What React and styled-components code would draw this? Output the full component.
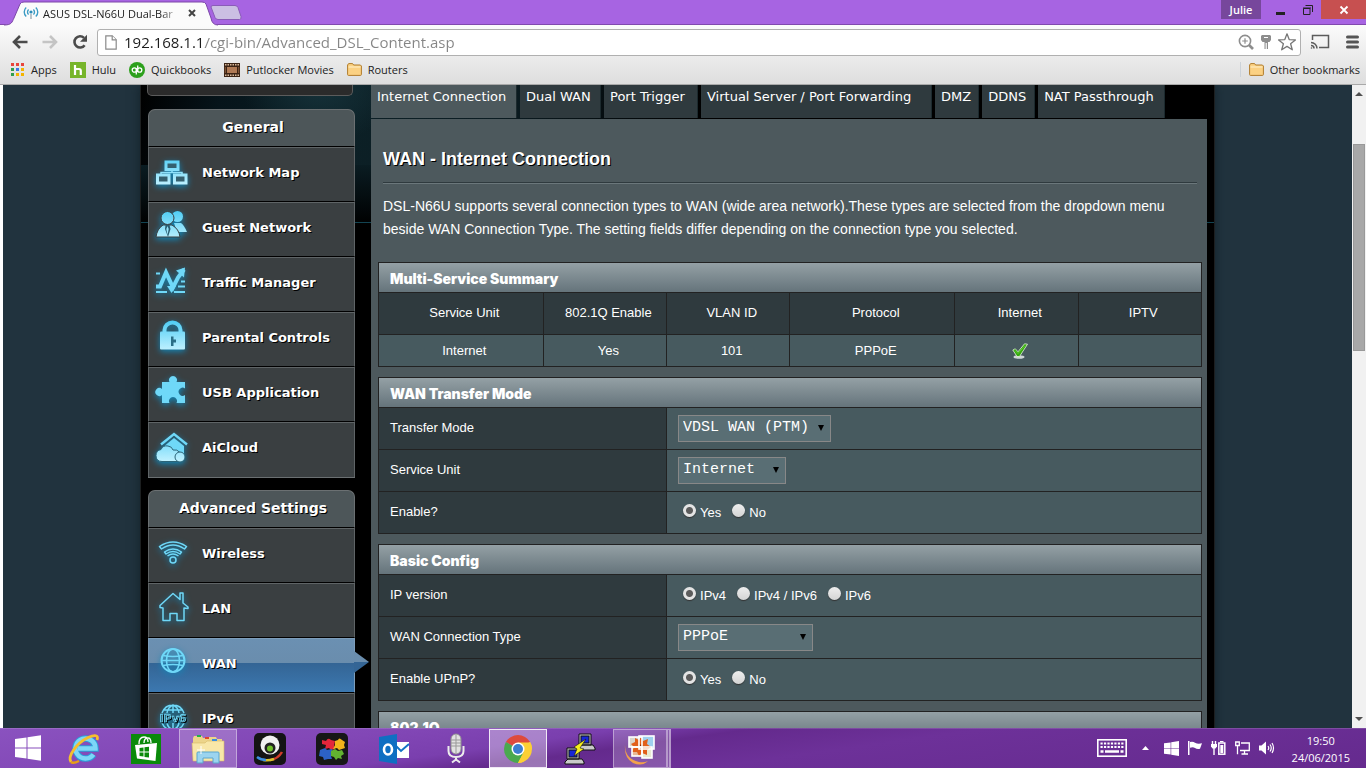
import React, { useState } from 'react';
import styled, { createGlobalStyle, css } from 'styled-components';

const uiFont = '"Open Sans", "Noto Sans", sans-serif';
const menuFont = '"DejaVu Sans", sans-serif';
const bodyFont = '"Liberation Sans", Arial, sans-serif';
const monoFont = '"Liberation Mono", monospace';

const GlobalStyle = createGlobalStyle`
  * {
    box-sizing: border-box;
  }
  body {
    margin: 0;
    overflow: hidden;
    font-family: ${bodyFont};
  }
  button, input, select {
    font: inherit;
    margin: 0;
  }
  button {
    background: none;
    border: 0;
    padding: 0;
    color: inherit;
  }
  a {
    color: inherit;
    text-decoration: none;
  }
  svg {
    display: block;
    flex: none;
    overflow: visible;
  }
`;

/* ---------- browser icons ---------- */

const AntennaIcon = () => (
  <svg width="14" height="14" viewBox="0 0 14 14" fill="none" stroke="#3d9cc4" strokeWidth="1.4">
    <circle cx="7" cy="6" r="1.6" fill="#2d8cb8" stroke="none" />
    <path d="M4.6 3.4a3.6 3.6 0 0 0 0 5.2M9.4 3.4a3.6 3.6 0 0 1 0 5.2M2.2 1.4a6.4 6.4 0 0 0 0 9.2M11.8 1.4a6.4 6.4 0 0 1 0 9.2" />
    <path d="M7 8v5" stroke="#b9c4c9" strokeWidth="2" />
  </svg>
);

const BackIcon = ({ color, flip }) => (
  <svg width="16" height="14" viewBox="0 0 16 14" fill="none" stroke={color} strokeWidth="2.6">
    <g transform={flip ? 'translate(16 0) scale(-1 1)' : undefined}>
      <path d="M15.5 7H2.5M8 1L2 7l6 6" />
    </g>
  </svg>
);

const ReloadIcon = () => (
  <svg width="16" height="16" viewBox="0 0 16 16">
    <path d="M12.6 11.2A5.6 5.6 0 1 1 12 3.9" fill="none" stroke="#4b4b4b" strokeWidth="2.6" />
    <path d="M15 .8v7H8z" fill="#4b4b4b" />
  </svg>
);

const PageIcon = () => (
  <svg width="12" height="15" viewBox="0 0 12 15" fill="#fff" stroke="#8a8a8a" strokeWidth="1.2">
    <path d="M.8.8h6.4l4 4v9.4H.8z" />
    <path d="M7.2.8v4h4" />
  </svg>
);

const ZoomIcon = () => (
  <svg width="16" height="16" viewBox="0 0 16 16" fill="none" stroke="#8d8d8d">
    <circle cx="7" cy="7" r="5.6" strokeWidth="1.6" />
    <path d="M4.2 7h5.6M7 4.2v5.6" strokeWidth="1.2" />
    <path d="M11 11l4 4" strokeWidth="2.6" />
  </svg>
);

const KeyIcon = () => (
  <svg width="10" height="16" viewBox="0 0 10 16">
    <path d="M1 1h8l1 1v4L8.500 8H7v7H3.500V8H1.500L0 6V2z" fill="#8d8d8d" />
    <path d="M3 3.500h4M5.200 9v6" stroke="#fff" strokeWidth="1.200" />
  </svg>
);

const StarIcon = () => (
  <svg width="18" height="18" viewBox="0 0 18 18">
    <path d="M9 .8l2.200 5.800 6.200.3-4.800 3.900 1.700 6L9 13.400l-5.300 3.400 1.700-6L.6 6.900l6.200-.3z" fill="#fff" stroke="#777" strokeWidth="1.300" strokeLinejoin="round" />
  </svg>
);

const CastIcon = () => (
  <svg width="20" height="16" viewBox="0 0 20 16" fill="none" stroke="#5c5c5c" strokeWidth="1.500">
    <path d="M2.500 6V1.500h16v12H9" />
    <path d="M1 8.500a6 6 0 0 1 6 6M1 11.500a3 3 0 0 1 3 3" />
    <circle cx="1.500" cy="14" r=".8" fill="#5c5c5c" stroke="none" />
  </svg>
);

const MenuIcon = () => (
  <svg width="13" height="14" viewBox="0 0 13 14">
    <path d="M1.500 2h10M1.500 7h10M1.500 12h10" stroke="#555" strokeWidth="3" strokeLinecap="round" />
  </svg>
);

const appColors = ['#e8453c', '#e8453c', '#e8453c', '#2f9e4f', '#3b78e7', '#f4b400', '#2f9e4f', '#f4b400', '#f4b400'];

const AppsIcon = () => (
  <svg width="14" height="14" viewBox="0 0 14 14">
    {appColors.map((fill, i) => (
      <rect key={i} x={(i % 3) * 5} y={Math.floor(i / 3) * 5} width="3" height="3" fill={fill} />
    ))}
  </svg>
);

const HuluIcon = () => (
  <svg width="16" height="16" viewBox="0 0 16 16">
    <rect width="16" height="16" fill="#77b52b" />
    <path d="M5 3v10M5 8.500q0-1.500 1.500-1.500H9q1.800 0 1.800 1.800V13" fill="none" stroke="#fff" strokeWidth="2.200" />
  </svg>
);

const QuickbooksIcon = () => (
  <svg width="16" height="16" viewBox="0 0 16 16" fill="none" stroke="#fff" strokeWidth="1.300">
    <circle cx="8" cy="8" r="8" fill="#2ca01c" stroke="none" />
    <circle cx="5.400" cy="8" r="2.200" />
    <circle cx="10.600" cy="8" r="2.200" />
    <path d="M7.300 6v6.500M8.700 3.500V10" />
  </svg>
);

const FilmIcon = () => (
  <svg width="16" height="14" viewBox="0 0 16 14">
    <rect width="16" height="14" fill="#3b2314" />
    <rect x="3" y="4" width="10" height="6" fill="#b07a55" />
    <path d="M1 1.800h14M1 12.200h14" stroke="#d9b99a" strokeWidth="1.600" strokeDasharray="1.500 1" />
    <path d="M1.300 4v6M14.700 4v6" stroke="#8a5a3a" />
  </svg>
);

const FolderIcon = () => (
  <svg width="15" height="13" viewBox="0 0 15 13">
    <path d="M.6 11.500V2L1.600.600h4l1 1.400h6.800l1 1v8.500q0 .9-1 .9H1.500q-.9 0-.9-.9z" fill="#fbd183" stroke="#b07c2c" />
    <path d="M1.500 4h12" stroke="#fff0c8" />
  </svg>
);

/* ---------- router menu icons ---------- */

const cyan = '#6fd8f8';
const glow = 'url(#glow)';

const IconDefs = () => (
  <svg width="0" height="0" aria-hidden="true">
    <linearGradient id="glow" gradientUnits="userSpaceOnUse" x1="0" y1="0" x2="0" y2="30">
      <stop offset="0" stopColor="#4fcdf5" />
      <stop offset="1" stopColor="#c3f2ff" />
    </linearGradient>
  </svg>
);

const menuIcons = {
  network: (
    <g fill="#35606f" stroke={glow} strokeWidth="3">
      <rect x="11" y="6" width="12" height="7.500" />
      <rect x="2.500" y="19" width="11.500" height="8" />
      <rect x="19.500" y="19" width="11.500" height="8" />
      <path d="M17 14v3M6 18v-1.500h21V18" strokeWidth="1.500" fill="none" />
    </g>
  ),
  guests: (
    <g fill={glow}>
      <circle cx="22.500" cy="5.500" r="5.500" />
      <path d="M19 12h7q3 2 6 9H22z" />
      <path d="M1 26q1-8 7-12h9q7 4 8 12z" stroke="#3a3f41" strokeWidth="1" />
      <circle cx="12.500" cy="7" r="6.500" stroke="#3a3f41" strokeWidth="1" />
      <path d="M10.500 14h4l1 4-2.500 8-3-8z" fill="#285c70" />
      <path d="M12.500 15l1.200 3-1.200 6-1.200-6z" />
    </g>
  ),
  traffic: (
    <g fill="none" stroke={cyan}>
      <path d="M1 20.500h4l6-14 7 15 5-10 6-8" strokeWidth="4" />
      <path d="M21 4.500l9-3-1 10z" fill={cyan} stroke="none" />
      <path d="M1 7.500h4M26 15.500h4M23 20.500h7M1 26h11M19 26h11" strokeWidth="2.200" />
      <path d="M12 20l4.500 7L21 20" fill={cyan} stroke="none" />
    </g>
  ),
  lock: (
    <g>
      <path d="M9.500 11V9a8 7.500 0 0 1 16 0v2" fill="none" stroke={glow} strokeWidth="4" />
      <rect x="5" y="10.500" width="25" height="18" rx="1" fill={glow} />
      <path d="M16 15.500h2.500v3h2.500v3h-2.500v3.500H16z" fill="#2a6e86" />
    </g>
  ),
  puzzle: (
    <path
      d="M7 6h7.500a4 4 0 1 1 7 0H30v6.500a4 4 0 1 0 0 6.500v8h-8.500a4 4 0 1 0-7 0H7v-8a4 4 0 1 1 0-6z"
      fill={cyan}
    />
  ),
  cloud: (
    <g>
      <path d="M6 12.500L19 2l13 10.500" fill="none" stroke={cyan} strokeWidth="2.400" />
      <path d="M10 13.500L19 6l10 8v11H10z" fill={cyan} />
      <path d="M7 29.500q-6 0-6-6 0-5 5-6 2-4.500 7-3.500 4 .5 5 4 4-1 7 2.500l-2 9z" fill={glow} stroke="#2a6478" strokeWidth="1" />
      <circle cx="25" cy="25" r="5" fill={glow} stroke="#2a6478" strokeWidth="1" />
    </g>
  ),
  wifi: (
    <g fill="none" stroke={cyan} strokeWidth="1.500" strokeLinejoin="round">
      <path d="M4.500 9.500q13.500-9 27 0l-2 2.500q-11.500-8-23 0z" />
      <path d="M9.500 15q8.500-6 17 0l-1.500 2q-7-5-14 0z" />
      <path d="M12.500 19q5.500-4 11 0" />
      <circle cx="18" cy="23" r="3" />
    </g>
  ),
  home: (
    <path
      d="M5 15.500v-2L18 1.500l7 6V1h3v10l5 4v1.500l-4-.500v12.500h-7v-7h-7v7H8V16z"
      fill="none" stroke={cyan} strokeWidth="1.500" strokeLinejoin="round"
    />
  ),
  globe: (
    <g fill="none" stroke={cyan} strokeWidth="1.600">
      <circle cx="18" cy="13.500" r="11.500" strokeWidth="2" />
      <ellipse cx="18" cy="13.500" rx="6.500" ry="11.500" />
      <path d="M6 13.500h24M8 8.500q10 2 20 0M8 18.500q10-2 20 0" />
    </g>
  ),
  ipv6: (
    <g fill="none" stroke={cyan} strokeWidth="1.500">
      <path d="M7 10q3-8 11-8t11 8M7 20q3 7 11 7t11-7M12 10q1-6 6-8 5 2 6 8M12 20q1 5 6 7 5-2 6-7M18 2v8M18 20v7M9 7h18" />
      <text x="18" y="19" textAnchor="middle" fontFamily={menuFont} fontSize="11" fill={cyan} stroke={cyan} strokeWidth=".5">IPv6</text>
    </g>
  ),
};

const TickIcon = () => (
  <svg width="16" height="16" viewBox="0 0 16 16">
    <ellipse cx="7" cy="14" rx="5.500" ry="1.800" fill="#cfd6d6" />
    <path d="M.8 7l2.500-1.200 2.700 3L12.500.8l3 .4L7.500 13.500H5z" fill="#37a80f" stroke="#e6f3df" strokeWidth=".8" />
    <path d="M1.800 7l1.400-.5 2.800 3.500L13 1.800l1.200.2L7 12H5.500z" fill="#37a80f" />
    <path d="M3 7.500l3 3L13 2.500" fill="none" stroke="#5fce35" />
  </svg>
);

/* ---------- taskbar icons ---------- */

const WindowsIcon = ({ size }) => (
  <svg width={size} height={size} viewBox="0 0 26 26" fill="#fff">
    <path d="M0 4l11.500-1.600V12.500H0zM12.500 2.200L26 .2v12.300H12.500zM0 13.500h11.500v10L0 22zM12.500 13.500H26v12.300l-13.500-2z" />
  </svg>
);

const ExplorerIcon = () => (
  <svg width="32" height="30" viewBox="0 0 32 30" fill="none">
    <path d="M25.500 20.500a10 10 0 1 1 2-6H10" stroke="#2b9fd8" strokeWidth="6.500" />
    <path d="M25.500 20.500a10 10 0 1 1 2-6H10" stroke="#7dd6f7" strokeWidth="4.500" />
    <path d="M3 28C-1 22 9 9 20 3.500 27 .5 31 1 29 6" stroke="#f5bf2d" strokeWidth="2.800" />
    <path d="M3 28q2 2 8-1" stroke="#e79f17" strokeWidth="2.500" />
  </svg>
);

const StoreIcon = () => (
  <svg width="30" height="30" viewBox="0 0 30 30">
    <rect width="30" height="30" fill="#0a8a0a" />
    <path d="M8 10q0-7 5-7 4 0 4 5M13 9q0-5 4-5 3 0 3 5" fill="none" stroke="#fff" strokeWidth="1.300" />
    <path d="M4 11l22-2-1.500 18L6 24.500z" fill="#fff" />
    <path d="M8.500 14l4-.5v4h-4zM13.500 13.300l4.500-.5v4.700h-4.500zM8.500 18.500h4v4l-4-.5zM13.500 18.500H18v5l-4.500-.6z" fill="#0a8a0a" />
  </svg>
);

const FilesIcon = () => (
  <svg width="32" height="30" viewBox="0 0 32 30">
    <path d="M1 4l1-2h8l1 2h5l1-1h7l1 2h5v22H1z" fill="#ecd48a" />
    <path d="M0 9h13l2-2h17v20H1z" fill="#f8e7a8" stroke="#d6b966" strokeWidth=".6" />
    <path d="M5 1h4v2H5z" fill="#20b04b" />
    <path d="M13 3h4v2h-4z" fill="#e0482e" />
    <path d="M20 5h5v2h-5z" fill="#3a8ee0" />
    <path d="M5 29V19q0-1 1-1h20q1 0 1 1v10h-6v-5H11v5z" fill="#9bd4ef" stroke="#5aa6ce" />
    <path d="M9 12v8M5 16h8" stroke="#fff" />
  </svg>
);

const WebcamIcon = () => (
  <svg width="32" height="32" viewBox="0 0 32 32">
    <rect width="32" height="32" rx="5" fill="#141414" />
    <path d="M16 27q8-1 12-8" fill="none" stroke="#d13b2a" strokeWidth="2.500" />
    <path d="M9 27q6 1 11-1" fill="none" stroke="#d9c22e" strokeWidth="2.500" />
    <path d="M3 24q4 3 9 3" fill="none" stroke="#3c8fe0" strokeWidth="2.500" />
    <circle cx="16" cy="12" r="9.500" fill="#f1f1f1" />
    <circle cx="16" cy="15" r="5.500" fill="#222" />
    <circle cx="16" cy="15.500" r="3" fill="#6ec028" />
  </svg>
);

const JigsawIcon = () => (
  <svg width="32" height="32" viewBox="0 0 32 32">
    <rect width="32" height="32" rx="5" fill="#171717" />
    <path d="M6 7l4 1q2-4 5-1l4 1-1 5 1 3-4 1-2-2-4 1 1-4-4-1z" fill="#e3263b" />
    <path d="M19 8l3-1q1-3 4 0l3 2-1 3 1 3-6 2-2-2-4 1 2-4z" fill="#f2b31b" />
    <path d="M4 17l5-2 2 2 5-1 1 5-2 2 1 3-4 0-4 1-1-3-4-1z" fill="#2c62c6" />
    <path d="M15 18l4-2 3 2 4-1 2 4-3 2 1 3-4-1-2 2-2-3-3-1z" fill="#62b331" />
  </svg>
);

const OutlookIcon = () => (
  <svg width="30" height="30" viewBox="0 0 30 30">
    <rect x="16" y="8" width="14" height="16" fill="#fff" />
    <path d="M17 12l5 5 8-7" fill="none" stroke="#1272c4" strokeWidth="2" />
    <path d="M0 3l18-3v30L0 27z" fill="#0f6fc2" />
    <ellipse cx="9" cy="15.500" rx="4" ry="5" fill="none" stroke="#fff" strokeWidth="2.600" />
  </svg>
);

const MicIcon = () => (
  <svg width="18" height="30" viewBox="0 0 18 30">
    <rect x="4" y="0" width="10" height="20" rx="5" fill="#e2e2e2" stroke="#8f8f8f" />
    <path d="M4 6h10M4 9h10M4 12h10M9 1v18" stroke="#999" />
    <path d="M1.500 12v5q0 6 7.500 6t7.500-6v-5M9 23v4M5 28.500l4-3 4 3" fill="none" stroke="#ececec" strokeWidth="2" />
  </svg>
);

const ChromeIcon = () => (
  <svg width="28" height="28" viewBox="0 0 28 28">
    <path d="M14 14L1.900 7a14 14 0 0 1 24.200 0z" fill="#de4a3c" />
    <path d="M14 14l12.100-7A14 14 0 0 1 14 28z" fill="#fcd035" />
    <path d="M14 14v14A14 14 0 0 1 1.900 7z" fill="#4aa94e" />
    <path d="M14 7.500h12.400q1.600 3 1.600 6.500L19.500 17z" fill="#fcd035" />
    <path d="M8.300 17.200L14 28l5.600-10.800z" fill="#4aa94e" />
    <path d="M20 17l-6 11q3 0 6-1.500z" fill="#fcd035" />
    <circle cx="14" cy="14" r="6.500" fill="#fff" />
    <circle cx="14" cy="14" r="5" fill="#3c7fd0" />
  </svg>
);

const PuttyIcon = () => (
  <svg width="32" height="32" viewBox="0 0 32 32" stroke="#111" strokeWidth="1">
    <path d="M15 1h12v11H15zM13 15l3-3h13l2 3v2H15z" fill="#c9c9c9" />
    <rect x="17" y="3" width="8" height="7" fill="#1726d6" />
    <path d="M3 15h12v11H3zM1 29l3-3h14l2 3v2H1z" fill="#c9c9c9" />
    <rect x="5" y="17" width="8" height="7" fill="#1726d6" />
    <path d="M22 6l-6 9 4 1-10 7 3-7-3-2z" fill="#f7f01c" strokeWidth=".6" />
  </svg>
);

const PhotosIcon = () => (
  <svg width="32" height="32" viewBox="0 0 32 32">
    <path d="M1 12q0 14 14 17 5 1 9-1-6 6-15 2Q0 25 1 12z" fill="#f2a24a" />
    <rect x="5" y="4" width="13" height="10" fill="#d9d6cc" />
    <rect x="15" y="3" width="15" height="13" fill="#9fd1ee" />
    <rect x="8" y="14" width="10" height="9" fill="#e7b894" />
    <rect x="18" y="14" width="10" height="11" fill="#e8ead0" />
    <path d="M17 4l2 4 5-2-1 5 4 3-4 3 0 5-5-2-3 3-2-4-5 0 2-5-3-3 4-2 0-4 4 2z" fill="#e2601b" />
    <circle cx="17" cy="14" r="2.500" fill="#8c2a08" />
    <g fill="none" stroke="#fff" strokeWidth="1.600">
      <rect x="5" y="4" width="13" height="10" />
      <rect x="15" y="3" width="15" height="13" />
      <rect x="8" y="14" width="10" height="9" />
      <rect x="18" y="14" width="10" height="11" />
    </g>
  </svg>
);

const KeyboardIcon = () => (
  <svg width="30" height="18" viewBox="0 0 30 18">
    <rect x=".8" y=".8" width="28.400" height="16.400" fill="none" stroke="#fff" strokeWidth="1.600" />
    <path d="M3.500 4.500h23M3.500 8h23" stroke="#fff" strokeWidth="2.200" strokeDasharray="2.200 1.260" />
    <path d="M3.500 12.500h3M8 12.500h14M23.500 12.500h3" stroke="#fff" strokeWidth="2.500" />
  </svg>
);

const FlagIcon = () => (
  <svg width="14" height="14" viewBox="0 0 14 14" fill="#fff">
    <path d="M0 0h1.500v14H0zM2 1q3-1 5 .8 3 1.500 7 .5l-2 5.500q-3 .8-5-.8-2-1.200-5-.2z" />
  </svg>
);

const BatteryIcon = () => (
  <svg width="15" height="14" viewBox="0 0 15 14" fill="none" stroke="#fff">
    <path d="M1.500 0v3M4.500 0v3M3 7v7" strokeWidth="1.400" />
    <path d="M0 3h6v2.500L4.500 7.500h-3L0 5.500z" fill="#fff" stroke="none" />
    <rect x="7.800" y="2" width="6" height="11.200" strokeWidth="1.500" />
    <path d="M10.800 4v8" strokeWidth="3" />
    <path d="M9 .5h3.500" />
  </svg>
);

const NetworkIcon = () => (
  <svg width="15" height="14" viewBox="0 0 15 14" fill="none" stroke="#fff" strokeWidth="1.300">
    <path d="M6 2h8.300v7.500H5M9.500 9.500v3M6.500 13h6.500" />
    <path d="M.7 1v3.500h3.600V1zM2.500 4.500v8.800" />
  </svg>
);

const SpeakerIcon = () => (
  <svg width="15" height="14" viewBox="0 0 15 14" fill="none" stroke="#fff" strokeWidth="1.200">
    <path d="M0 4.500h2.500L7 .5v13l-4.500-4H0z" fill="#fff" stroke="none" />
    <path d="M9 5q1.500 2 0 4M11 3.500q2.500 3.500 0 7M13 2q3 5 0 10" />
  </svg>
);

/* ---------- data ---------- */

const bookmarks = [
  { label: 'Apps', icon: <AppsIcon /> },
  { label: 'Hulu', icon: <HuluIcon /> },
  { label: 'Quickbooks', icon: <QuickbooksIcon /> },
  { label: 'Putlocker Movies', icon: <FilmIcon /> },
  { label: 'Routers', icon: <FolderIcon /> },
];

const generalMenu = [
  { label: 'Network Map', icon: 'network' },
  { label: 'Guest Network', icon: 'guests' },
  { label: 'Traffic Manager', icon: 'traffic' },
  { label: 'Parental Controls', icon: 'lock' },
  { label: 'USB Application', icon: 'puzzle' },
  { label: 'AiCloud', icon: 'cloud' },
];

const advancedMenu = [
  { label: 'Wireless', icon: 'wifi' },
  { label: 'LAN', icon: 'home' },
  { label: 'WAN', icon: 'globe', active: true },
  { label: 'IPv6', icon: 'ipv6' },
];

const tabs = [
  { label: 'Internet Connection', width: 146, active: true },
  { label: 'Dual WAN', width: 81 },
  { label: 'Port Trigger', width: 94 },
  { label: 'Virtual Server / Port Forwarding', width: 231 },
  { label: 'DMZ', width: 44 },
  { label: 'DDNS', width: 53 },
  { label: 'NAT Passthrough', width: 127 },
];

const summaryColumns = [
  ['Service Unit', '20%'],
  ['802.1Q Enable', '15%'],
  ['VLAN ID', '15%'],
  ['Protocol', '20%'],
  ['Internet', '15%'],
  ['IPTV', '15%'],
];

const taskbarApps = [
  { name: 'Internet Explorer', icon: <ExplorerIcon /> },
  { name: 'Store', icon: <StoreIcon /> },
  { name: 'File Explorer', icon: <FilesIcon />, open: true },
  { name: 'Webcam', icon: <WebcamIcon /> },
  { name: 'Jigsaw', icon: <JigsawIcon /> },
  { name: 'Outlook', icon: <OutlookIcon /> },
  { name: 'Sound Recorder', icon: <MicIcon /> },
  { name: 'Chrome', icon: <ChromeIcon />, open: true, focused: true },
  { name: 'PuTTY', icon: <PuttyIcon /> },
  { name: 'Photo Gallery', icon: <PhotosIcon />, open: true, stacked: true },
];

/* ---------- components ---------- */

function Menu({ title, items }) {
  return (
    <MenuBox>
      <MenuTitle>{title}</MenuTitle>
      {items.map((item) => (
        <MenuItem key={item.label} href="#" $active={item.active}>
          <svg width="33" height="32" viewBox="0 0 33 32">{menuIcons[item.icon]}</svg>
          {item.label}
        </MenuItem>
      ))}
    </MenuBox>
  );
}

function Select({ id, width, options }) {
  return (
    <SelectWrap $width={width}>
      <select id={id}>
        {options.map((option) => <option key={option}>{option}</option>)}
      </select>
    </SelectWrap>
  );
}

function RadioGroup({ name, label, options }) {
  const [value, setValue] = useState(options[0]);

  return (
    <Radios role="radiogroup" aria-label={label}>
      {options.map((option) => (
        <label key={option}>
          <input
            type="radio"
            name={name}
            checked={value === option}
            onChange={() => setValue(option)}
          />
          {option}
        </label>
      ))}
    </Radios>
  );
}

function App() {
  return (
    <>
      <GlobalStyle />
      <Screen>
        <TitleBar>
          <BrowserTab>
            <svg className="shape" width="208" height="24" viewBox="0 0 208 24">
              <path d="M0 24C8 24 8 21 10 17L16 3q1-2 4-2h178q3 0 4 2l5 14q1 7 7 7z" fill="#fbfbfb" />
              <path d="M0 24C8 24 8 21 10 17L16 3q1-2 4-2h178q3 0 4 2l5 14q1 7 7 7" fill="none" stroke="#7c47a8" />
            </svg>
            <AntennaIcon />
            <span className="title">ASUS DSL-N66U Dual-Bar</span>
            <button aria-label="Close tab">
              <svg width="8" height="8" viewBox="0 0 8 8"><path d="M1 1l6 6M7 1L1 7" stroke="#444" strokeWidth="2" /></svg>
            </button>
          </BrowserTab>
          <NewTab aria-label="New tab">
            <svg width="32" height="15" viewBox="0 0 32 15">
              <path d="M1 2q0-1.500 2-1.500h22q2 0 3 2l3 9q.5 3-1.500 3H8q-2 0-3-2z" fill="#cbbfe3" stroke="#8a5bb8" />
            </svg>
          </NewTab>
          <WindowControls>
            <button className="user">Julie</button>
            <button aria-label="Minimize">
              <svg width="9" height="10" viewBox="0 0 9 10"><path d="M0 8.500h9" stroke="#222" strokeWidth="3" /></svg>
            </button>
            <button aria-label="Restore">
              <svg width="10" height="10" viewBox="0 0 10 10" fill="none" stroke="#222">
                <path d="M.5 3.500h6.500v6H.5zM0 3h8M2.500 .5h7v6.500" />
              </svg>
            </button>
            <button className="close" aria-label="Close">
              <svg width="8" height="8" viewBox="0 0 8 8"><path d="M.5.5l7 7M7.500.5l-7 7" stroke="#fff" strokeWidth="1.800" /></svg>
            </button>
          </WindowControls>
        </TitleBar>

        <Toolbar>
          <button aria-label="Back"><BackIcon color="#4b4b4b" /></button>
          <button aria-label="Forward"><BackIcon color="#c4c4c4" flip /></button>
          <button aria-label="Reload"><ReloadIcon /></button>
          <Omnibox>
            <PageIcon />
            <input aria-label="Address" defaultValue="192.168.1.1/cgi-bin/Advanced_DSL_Content.asp" />
            <ZoomIcon />
            <KeyIcon />
            <StarIcon />
          </Omnibox>
          <button aria-label="Cast"><CastIcon /></button>
          <button aria-label="Menu"><MenuIcon /></button>
        </Toolbar>

        <BookmarkBar>
          {bookmarks.map((bookmark) => (
            <a href="#" key={bookmark.label}>{bookmark.icon}{bookmark.label}</a>
          ))}
          <a href="#" className="other"><FolderIcon />Other bookmarks</a>
        </BookmarkBar>

        <Viewport>
          <Page>
            <IconDefs />
            <Site>
              <Sidebar>
                <SetupButton aria-label="Quick Internet Setup" />
                <Menu title="General" items={generalMenu} />
                <Menu title="Advanced Settings" items={advancedMenu} />
              </Sidebar>

              <Main>
                <Tabs>
                  {tabs.map((tab) => (
                    <Tab href="#" key={tab.label} $width={tab.width} $active={tab.active}>{tab.label}</Tab>
                  ))}
                </Tabs>
                <Panel>
                  <h1>WAN - Internet Connection</h1>
                  <p>
                    DSL-N66U supports several connection types to WAN (wide area network).These types are selected from the dropdown menu
                    beside WAN Connection Type. The setting fields differ depending on the connection type you selected.
                  </p>

                  <SummaryTable>
                    <caption>Multi-Service Summary</caption>
                    <thead>
                      <tr>
                        {summaryColumns.map(([label, width]) => <th key={label} width={width}>{label}</th>)}
                      </tr>
                    </thead>
                    <tbody>
                      <tr>
                        <td>Internet</td>
                        <td>Yes</td>
                        <td>101</td>
                        <td>PPPoE</td>
                        <td><TickIcon /></td>
                        <td />
                      </tr>
                    </tbody>
                  </SummaryTable>

                  <FormTable>
                    <caption>WAN Transfer Mode</caption>
                    <tbody>
                      <tr>
                        <th><label htmlFor="mode">Transfer Mode</label></th>
                        <td><Select id="mode" width={153} options={['VDSL WAN (PTM)', 'ADSL WAN (ATM)']} /></td>
                      </tr>
                      <tr>
                        <th><label htmlFor="unit">Service Unit</label></th>
                        <td><Select id="unit" width={108} options={['Internet']} /></td>
                      </tr>
                      <tr>
                        <th>Enable?</th>
                        <td><RadioGroup name="enable" label="Enable?" options={['Yes', 'No']} /></td>
                      </tr>
                    </tbody>
                  </FormTable>

                  <FormTable>
                    <caption>Basic Config</caption>
                    <tbody>
                      <tr>
                        <th>IP version</th>
                        <td><RadioGroup name="ip" label="IP version" options={['IPv4', 'IPv4 / IPv6', 'IPv6']} /></td>
                      </tr>
                      <tr>
                        <th><label htmlFor="type">WAN Connection Type</label></th>
                        <td><Select id="type" width={135} options={['PPPoE', 'PPPoA', 'IPoA']} /></td>
                      </tr>
                      <tr>
                        <th>Enable UPnP?</th>
                        <td><RadioGroup name="upnp" label="Enable UPnP?" options={['Yes', 'No']} /></td>
                      </tr>
                    </tbody>
                  </FormTable>

                  <FormTable>
                    <caption>802.1Q</caption>
                    <tbody />
                  </FormTable>
                </Panel>
              </Main>
            </Site>
          </Page>
          <Scrollbar>
            <i className="up" />
            <i className="thumb" />
            <i className="down" />
          </Scrollbar>
        </Viewport>

        <Taskbar>
          <StartButton aria-label="Start"><WindowsIcon size={26} /></StartButton>
          <Apps>
            {taskbarApps.map((app) => (
              <AppButton key={app.name} aria-label={app.name} $open={app.open} $focused={app.focused} $stacked={app.stacked}>
                {app.icon}
              </AppButton>
            ))}
          </Apps>
          <Tray>
            <KeyboardIcon />
            <svg width="7" height="4" viewBox="0 0 7 4"><path d="M0 4l3.500-4L7 4z" fill="#fff" /></svg>
            <div className="status">
              <WindowsIcon size={15} />
              <FlagIcon />
              <BatteryIcon />
              <NetworkIcon />
              <SpeakerIcon />
            </div>
            <time dateTime="2015-06-24T19:50">
              <span>19:50</span>
              <span>24/06/2015</span>
            </time>
          </Tray>
        </Taskbar>
      </Screen>
    </>
  );
}

/* ---------- styles ---------- */

const Screen = styled.div`
  display: flex;
  flex-direction: column;
  height: 100vh;
  overflow: hidden;
`;

const TitleBar = styled.div`
  display: flex;
  flex: none;
  height: 25px;
  background-color: #a764e2;
  border-bottom: 1px solid #8149ae;
  font-family: ${uiFont};
`;

const BrowserTab = styled.div`
  position: relative;
  display: flex;
  align-items: center;
  width: 204px;
  height: 25px;
  padding: 1px 8px 0 24px;
  gap: 5px;
  font-size: 11px;
  color: #222;
  .shape {
    position: absolute;
    left: 4px;
    top: 1px;
  }
  > svg, .title, button {
    position: relative;
  }
  .title {
    flex: 1;
    overflow: hidden;
    white-space: nowrap;
    mask-image: linear-gradient(to right, #000 85%, transparent);
  }
  button {
    padding: 0 0 0 2px;
  }
`;

const NewTab = styled.button`
  padding: 0 0 0 6px;
  height: 24px;
`;

const WindowControls = styled.div`
  display: flex;
  align-items: flex-start;
  margin-left: auto;
  button {
    display: flex;
    align-items: center;
    justify-content: center;
    width: 27px;
    height: 19px;
  }
  .user {
    width: 40px;
    margin-right: 6px;
    background-color: #77479c;
    color: #fff;
    font-size: 11px;
    font-weight: 600;
  }
  .close {
    width: 45px;
    background-color: #c75050;
  }
`;

const Toolbar = styled.div`
  display: flex;
  flex: none;
  align-items: center;
  height: 34px;
  padding: 0 7px 0 12px;
  gap: 14px;
  background: linear-gradient(#fbfbfb, #eaeaea);
  button:nth-child(3) {
    margin-right: -5px;
  }
  button:last-child {
    margin-left: 2px;
  }
  button:nth-last-child(2) {
    margin-left: -5px;
  }
`;

const Omnibox = styled.div`
  display: flex;
  flex: 1;
  align-items: center;
  gap: 7px;
  height: 27px;
  padding: 0 4px 0 7px;
  background-color: #fff;
  border: 1px solid #b0b0b0;
  border-radius: 3px;
  input {
    flex: 1;
    min-width: 0;
    border: 0;
    padding: 0;
    outline: 0;
    font-family: ${uiFont};
    font-size: 15px;
    color: transparent;
    background: linear-gradient(to right, #1c1c1c 81px, #858585 81px);
    background-clip: text;
  }
`;

const BookmarkBar = styled.nav`
  display: flex;
  flex: none;
  align-items: center;
  height: 26px;
  padding: 0 6px 4px 11px;
  gap: 13px;
  background: linear-gradient(#eaeaea, #dedede);
  border-bottom: 1px solid #a9a9a9;
  font-family: ${uiFont};
  font-size: 11px;
  color: #222;
  a {
    display: flex;
    align-items: center;
    gap: 6px;
  }
  .other {
    margin-left: auto;
    padding-left: 8px;
    border-left: 1px solid #ccd2d8;
  }
`;

const Viewport = styled.div`
  display: flex;
  flex: 1;
  min-height: 0;
`;

const Page = styled.div`
  flex: 1;
  overflow: hidden;
  background-color: #21333e;
  border-left: 3px solid #fff;
`;

const Site = styled.div`
  display: flex;
  gap: 16px;
  max-width: 1075px;
  min-height: 100%;
  margin: 0 auto;
  padding: 0 7px;
  border: solid #1c1f20;
  border-width: 0 1px;
  box-shadow: 0 0 10px #12222a;
  background:
    linear-gradient(#134452, #134452) 0 137px / 100% 1px no-repeat,
    radial-gradient(ellipse at 60% 0, #16323a, transparent 70%) 100px 0 / 130px 60px no-repeat,
    linear-gradient(100deg, #000 0, #06141a 80px, #0c2026 200px, #0b1c22 360px, #000 560px) 0 0 / 600px 80px no-repeat,
    linear-gradient(#0a1c22, #000) 0 80px / 300px 60px no-repeat,
    #000;
`;

const Sidebar = styled.aside`
  display: flex;
  flex: none;
  flex-direction: column;
  width: 207px;
  font-family: ${menuFont};
  font-weight: bold;
  color: #fff;
  text-shadow: 1px 1px 0 #000;
`;

const SetupButton = styled.button`
  height: 11px;
  margin: 0 2px 1px -1px;
  border: 1px solid #5c5c5c;
  border-top: 0;
  border-radius: 0 0 5px 5px;
  background-color: #2b2b2b;
`;

const MenuBox = styled.nav`
  margin-top: 12px;
  border-bottom: 1px solid #6b7072;
`;

const MenuTitle = styled.h2`
  display: flex;
  align-items: center;
  justify-content: center;
  height: 38px;
  margin: 0;
  padding: 0 0 2px 3px;
  border: 1px solid #6b7072;
  border-bottom-color: #000;
  border-radius: 7px 7px 0 0;
  background-color: #4d5659;
  font-size: 14px;
`;

const MenuItem = styled.a`
  position: relative;
  display: flex;
  align-items: center;
  gap: 14px;
  height: 55px;
  padding: 0 0 5px 6px;
  border: 1px solid #5f6466;
  border-bottom-color: #000;
  background-color: #3a3f41;
  font-size: 13px;
  svg {
    filter: drop-shadow(0 2px 3px #1287b8);
  }
  &:last-child {
    border-bottom: 0;
  }
  ${({ $active }) => $active && css`
    border-color: #7d9dba;
    border-bottom-color: #000;
    background: linear-gradient(#6b90b2, #6a8dad 45%, #346595 46%, #3c78b0);
    &::after {
      content: '';
      position: absolute;
      left: 100%;
      top: 12px;
      width: 15px;
      height: 22px;
      background: linear-gradient(#6a8dad 50%, #346595 50%);
      clip-path: polygon(0 0, 100% 50%, 0 100%);
    }
  `}
`;

const Main = styled.main`
  flex: 1;
  min-width: 0;
`;

const Tabs = styled.nav`
  display: flex;
  gap: 3px;
  height: 34px;
  padding-bottom: 1px;
`;

const Tab = styled.a`
  min-width: ${({ $width }) => $width}px;
  padding: 3px 7px 0 6px;
  border-right: 1px solid #1c2a2e;
  background-color: ${({ $active }) => ($active ? '#4d595d' : '#2f3a3e')};
  font-family: ${menuFont};
  font-size: 13px;
  line-height: 18px;
  white-space: nowrap;
  color: #fff;
`;

const Panel = styled.section`
  padding: 0 5px 0 7px;
  background-color: #4d595d;
  color: #fff;
  h1 {
    margin: 0 5px 0 5px;
    padding: 29px 0 12px;
    border-bottom: 1px solid #2f3a3e;
    box-shadow: 0 1px 0 #6b777b;
    font-size: 18px;
    line-height: 22px;
    text-shadow: 1px 1px 0 #000;
  }
  p {
    margin: 12px 5px 21px;
    font-size: 14px;
    line-height: 23px;
  }
`;

const BaseTable = styled.table`
  width: 100%;
  margin-bottom: 10px;
  border-collapse: collapse;
  table-layout: fixed;
  font-size: 13px;
  caption {
    height: 30px;
    padding-left: 11px;
    border: 1px solid #222;
    border-bottom: 0;
    background: linear-gradient(#94a0a5, #65747b);
    font-family: Inter, sans-serif;
    font-size: 14px;
    font-weight: 900;
    line-height: 31px;
    text-align: left;
  }
  th, td {
    border: 1px solid #222;
    font-weight: normal;
  }
  th {
    height: 42px;
    background-color: #2f3a3e;
  }
  td {
    background-color: #475a5f;
  }
`;

const SummaryTable = styled(BaseTable)`
  th {
    padding: 0 2px 2px 9px;
  }
  td {
    height: 32px;
    padding: 0 2px 0 9px;
    text-align: center;
  }
  svg {
    margin: 0 auto;
  }
`;

const FormTable = styled(BaseTable)`
  th {
    width: 35%;
    padding: 0 11px 2px;
    text-align: left;
  }
  td {
    padding: 0 11px;
  }
`;

const SelectWrap = styled.div`
  position: relative;
  width: ${({ $width }) => $width}px;
  select {
    display: block;
    appearance: none;
    width: 100%;
    height: 27px;
    padding: 0 4px 2px;
    border: 1px solid #888;
    border-radius: 0;
    background-color: #596e74;
    color: #fff;
    font-family: ${monoFont};
    font-size: 15px;
  }
  &::after {
    content: '';
    position: absolute;
    right: 7px;
    top: 10px;
    border: solid transparent;
    border-width: 6px 3px 0;
    border-top-color: #000;
    pointer-events: none;
  }
`;

const Radios = styled.div`
  display: flex;
  gap: 11px;
  padding-left: 5px;
  label {
    display: flex;
    align-items: center;
    gap: 4px;
  }
  input {
    appearance: none;
    width: 13px;
    height: 13px;
    margin-bottom: 5px;
    border-radius: 50%;
    background: linear-gradient(#eee, #d4d4d4);
    box-shadow: 0 1px 1px #333;
  }
  input:checked {
    background: radial-gradient(circle, #5c5c5c 0 3px, #e4e4e4 4px);
  }
`;

const Scrollbar = styled.div`
  display: flex;
  flex: none;
  flex-direction: column;
  align-items: center;
  width: 14px;
  padding: 7px 0;
  background-color: #f1f1f1;
  .up, .down {
    border: 4px solid transparent;
  }
  .up {
    border-top: 0;
    border-bottom-color: #505050;
  }
  .down {
    margin-top: auto;
    border-bottom: 0;
    border-top-color: #505050;
  }
  .thumb {
    width: 12px;
    height: 207px;
    margin-top: 48px;
    border: 1px solid #999;
    background-color: #a8a8a8;
  }
`;

const Taskbar = styled.footer`
  display: flex;
  flex: none;
  height: 40px;
  background:
    linear-gradient(rgba(255, 255, 255, 0.14) 0 1px, transparent 1px),
    linear-gradient(172deg, #8a52bf 0, #8247b6 25%, #7a3fae 38%, #642a8d 46%, #6d3199 60%, #652a8e);
`;

const StartButton = styled.button`
  padding: 0 14px 0 15px;
`;

const Apps = styled.div`
  display: flex;
  gap: 4px;
`;

const AppButton = styled.button`
  display: flex;
  align-items: center;
  justify-content: center;
  width: 58px;
  height: 39px;
  margin-top: 1px;
  ${({ $open }) => $open && css`
    border: 1px solid rgba(255, 255, 255, 0.4);
    background-color: rgba(255, 255, 255, 0.2);
  `}
  ${({ $focused }) => $focused && css`
    border-color: #f0e8f5;
    background-color: rgba(255, 255, 255, 0.35);
  `}
  ${({ $stacked }) => $stacked && css`
    border-right-width: 5px;
    border-right-style: double;
  `}
`;

const Tray = styled.div`
  display: flex;
  align-items: center;
  margin-left: auto;
  padding-right: 16px;
  gap: 15px;
  color: #fff;
  font-family: ${uiFont};
  font-size: 11px;
  line-height: 17px;
  .status {
    display: flex;
    align-items: center;
    gap: 9px;
  }
  time {
    display: flex;
    flex-direction: column;
    align-items: center;
    padding: 2px 0 0 3px;
  }
`;

export default App;
